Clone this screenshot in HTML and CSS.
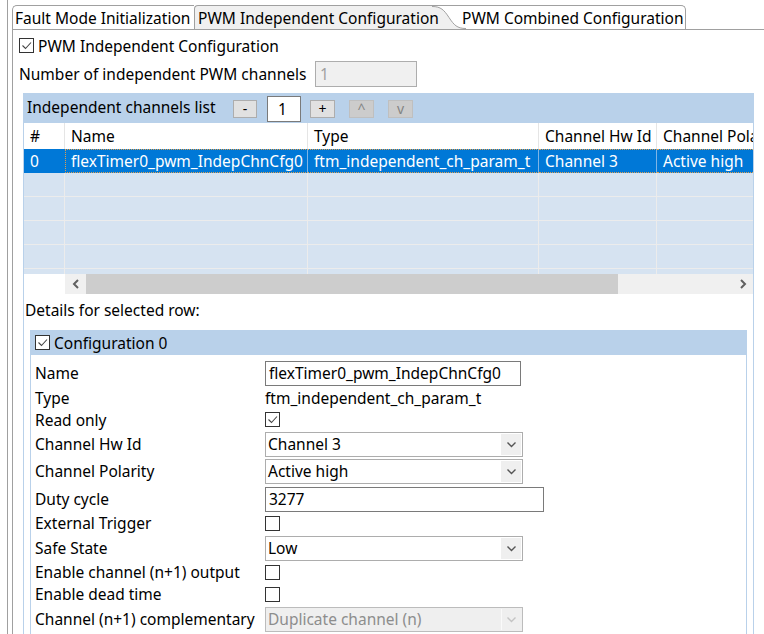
FILE: index.html
```html
<!DOCTYPE html>
<html>
<head>
<meta charset="utf-8">
<link rel="stylesheet" href="styles.css">
</head>
<body>
<div class="window">
  <div class="tabs">
    <div class="tab tab-first">Fault Mode Initialization</div>
    <div class="tab tab-sel">PWM Independent Configuration</div>
    <div class="tab tab-last">
      <svg class="slope" width="34" height="23" viewBox="0 0 34 23"><path d="M0 0 C9 0 12 4 17 11.5 C22 19 25 22.5 34 22.5 L34 23 L0 23 Z" fill="#f0f0f0"/><path d="M0 0.5 C9 0.5 12 4 17 11.5 C22 19 25 22.5 34 22.5" fill="none" stroke="#a0a0a0"/></svg>
      <span class="tab-text">PWM Combined Configuration</span>
    </div>
    <div class="tab-fill"></div>
  </div>
  <div class="page">
    <div class="check-row">
      <span class="cb"><svg width="13" height="13" viewBox="0 0 13 13"><polyline points="2.5,6.5 5.5,9.5 11,3.5" fill="none" stroke="#444" stroke-width="1.1"/></svg></span>
      <span>PWM Independent Configuration</span>
    </div>
    <div class="num-row">
      <span class="num-label">Number of independent PWM channels</span>
      <div class="field disabled">1</div>
    </div>
    <div class="group">
      <div class="group-head">
        <span class="group-title">Independent channels list</span>
        <span class="btn w24">-</span>
        <span class="spin">1</span>
        <span class="btn plus">+</span>
        <span class="btn dis up">^</span>
        <span class="btn dis down">v</span>
      </div>
      <div class="table">
        <div class="trow thead">
          <div class="c">#</div><div class="c">Name</div><div class="c">Type</div><div class="c">Channel Hw Id</div><div class="c">Channel Polarity</div>
        </div>
        <div class="tbody">
          <div class="trow sel">
            <div class="c">0</div><div class="c f first">flexTimer0_pwm_IndepChnCfg0</div><div class="c f">ftm_independent_ch_param_t</div><div class="c f">Channel 3</div><div class="c f">Active high</div>
          </div>
          <div class="trow empty"><div class="c"></div><div class="c"></div><div class="c"></div><div class="c"></div><div class="c"></div></div>
          <div class="trow empty"><div class="c"></div><div class="c"></div><div class="c"></div><div class="c"></div><div class="c"></div></div>
          <div class="trow empty"><div class="c"></div><div class="c"></div><div class="c"></div><div class="c"></div><div class="c"></div></div>
          <div class="trow empty"><div class="c"></div><div class="c"></div><div class="c"></div><div class="c"></div><div class="c"></div></div>
          <div class="trow empty"><div class="c"></div><div class="c"></div><div class="c"></div><div class="c"></div><div class="c"></div></div>
        </div>
      </div>
      <div class="hscroll">
        <span class="arr"><svg width="8" height="10" viewBox="0 0 8 10"><polyline points="6,1 2,5 6,9" fill="none" stroke="#606060" stroke-width="2"/></svg></span>
        <span class="thumb"></span>
        <span class="track"></span>
        <span class="arr"><svg width="8" height="10" viewBox="0 0 8 10"><polyline points="2,1 6,5 2,9" fill="none" stroke="#606060" stroke-width="2"/></svg></span>
      </div>
      <div class="details">Details for selected row:</div>
      <div class="config">
        <div class="config-head">
          <span class="cb"><svg width="13" height="13" viewBox="0 0 13 13"><polyline points="2.5,6.5 5.5,9.5 11,3.5" fill="none" stroke="#444" stroke-width="1.1"/></svg></span>
          <span>Configuration 0</span>
        </div>
        <div class="form">
          <div class="frow h27 in"><span class="lbl">Name</span><div class="input w256">flexTimer0_pwm_IndepChnCfg0</div></div>
          <div class="frow h22 tx"><span class="lbl">Type</span><span class="val">ftm_independent_ch_param_t</span></div>
          <div class="frow h22 ck"><span class="lbl">Read only</span><span class="cb ro"><svg width="13" height="13" viewBox="0 0 13 13"><polyline points="2.5,6.5 5.5,9.5 11,3.5" fill="none" stroke="#444" stroke-width="1.1"/></svg></span></div>
          <div class="frow h27 in"><span class="lbl">Channel Hw Id</span><div class="select"><span class="sv">Channel 3</span><span class="dd"><svg width="9" height="6" viewBox="0 0 9 6"><polyline points="0.5,0.5 4.5,4.5 8.5,0.5" fill="none" stroke="#555" stroke-width="1.4"/></svg></span></div></div>
          <div class="frow h28 in"><span class="lbl">Channel Polarity</span><div class="select"><span class="sv">Active high</span><span class="dd"><svg width="9" height="6" viewBox="0 0 9 6"><polyline points="0.5,0.5 4.5,4.5 8.5,0.5" fill="none" stroke="#555" stroke-width="1.4"/></svg></span></div></div>
          <div class="frow h26 in"><span class="lbl">Duty cycle</span><div class="input w279">3277</div></div>
          <div class="frow h23 ck"><span class="lbl">External Trigger</span><span class="cb"></span></div>
          <div class="frow h26 in"><span class="lbl">Safe State</span><div class="select"><span class="sv">Low</span><span class="dd"><svg width="9" height="6" viewBox="0 0 9 6"><polyline points="0.5,0.5 4.5,4.5 8.5,0.5" fill="none" stroke="#555" stroke-width="1.4"/></svg></span></div></div>
          <div class="frow h22 ck"><span class="lbl">Enable channel (n+1) output</span><span class="cb"></span></div>
          <div class="frow h23 ck"><span class="lbl">Enable dead time</span><span class="cb"></span></div>
          <div class="frow h27 in"><span class="lbl">Channel (n+1) complementary</span><div class="select off"><span class="sv">Duplicate channel (n)</span><span class="dd"><svg width="9" height="6" viewBox="0 0 9 6"><polyline points="0.5,0.5 4.5,4.5 8.5,0.5" fill="none" stroke="#c4c4c4" stroke-width="1.4"/></svg></span></div></div>
        </div>
      </div>
    </div>
  </div>
</div>
</body>
</html>
```

FILE: styles.css
```css
* { box-sizing: border-box; }
html, body { margin: 0; padding: 0; }
body {
  width: 764px;
  height: 634px;
  overflow: hidden;
  background: #fff;
  font-family: "Noto Sans", "Open Sans", sans-serif;
  font-size: 15.5px;
  color: #000;
}
.window {
  margin-left: 7px;
  height: 634px;
  border-left: 1px solid #a0a0a0;
  padding-left: 4px;
  padding-top: 5px;
}

/* tabs */
.tabs {
  display: flex;
  height: 25px;
  border-bottom: 1px solid #a0a0a0;
}
.tab {
  height: 24px;
  line-height: 24px;
  border-top: 1px solid #a0a0a0;
  white-space: nowrap;
  flex: none;
}
.tab-first {
  width: 182px;
  border-left: 1px solid #a0a0a0;
  border-top-left-radius: 5px;
  padding-left: 2px;
}
.tab-sel {
  width: 238px;
  background: #f0f0f0;
  border-left: 1px solid #a0a0a0;
  border-top-left-radius: 4px;
  padding-left: 3px;
  position: relative;
  z-index: 1;
}
.tab-last {
  width: 254px;
  display: flex;
  align-items: flex-start;
  border-right: 1px solid #a0a0a0;
  border-top-right-radius: 5px;
  overflow: hidden;
}
.slope { flex: none; display: block; margin-right: -4px; }
.tab-fill { flex: 1; }

/* page */
.page {
  border-left: 1px solid #a0a0a0;
  height: 604px;
  padding-left: 6px;
  padding-top: 6px;
}
.check-row {
  display: flex;
  align-items: center;
  height: 19px;
}
.check-row .cb { margin-right: 4px; }
.cb {
  width: 15px;
  height: 15px;
  border: 1px solid #333;
  background: #fff;
  flex: none;
  display: flex;
  align-items: center;
  justify-content: center;
}
.cb svg { display: block; }
.num-row {
  display: flex;
  align-items: center;
  height: 26px;
  margin-top: 6px;
}
.num-label { width: 296px; flex: none; }
.field {
  width: 102px;
  height: 26px;
  border: 1px solid #adadad;
  padding-left: 4px;
  line-height: 24px;
}
.field.disabled { background: #f0f0f0; color: #a0a0a0; }

/* group */
.group {
  margin-top: 6px;
  margin-left: 4px;
  width: 731px;
  height: 560px;
  border: 1px solid #b9d1ea;
  border-bottom: none;
}
.group-head {
  display: flex;
  align-items: center;
  height: 29px;
  background: #b9d1ea;
  padding-left: 3px;
}
.group-title { width: 206px; flex: none; margin-bottom: 4px; }
.btn {
  width: 25px;
  height: 18px;
  border: 1px solid #adadad;
  background: #e1e1e1;
  text-align: center;
  line-height: 15px;
  font-size: 14px;
  flex: none;
}
.btn.w24 { width: 24px; }
.btn.plus { margin-left: 9px; }
.btn.up, .btn.down { margin-left: 14px; }
.btn.dis { background: #cccccc; border-color: #bfbfbf; color: #838383; }
.spin {
  width: 34px;
  height: 26px;
  margin-left: 10px;
  border: 1px solid #7a7a7a;
  background: #fff;
  text-align: center;
  line-height: 24px;
  padding-right: 3px;
  flex: none;
}

/* table */
.trow {
  display: grid;
  grid-template-columns: 41px 243px 231px 118px 96px;
}
.c {
  padding-left: 6px;
  white-space: nowrap;
  overflow: hidden;
  border-right: 1px solid #e5e5e5;
}
.c:last-child { border-right: none; }
.thead { height: 26px; line-height: 26px; background: #fff; }
.tbody { height: 125px; overflow: hidden; }
.sel { height: 24px; background: #0078d7; color: #fff; }
.sel .c { line-height: 22px; border-right-color: #7fb5e6; }
.sel .c:first-child { border-right: none; line-height: 24px; }
.sel .c.f {
  border-top: 1px dotted #e0a050;
  border-bottom: 1px dotted #e0a050;
}
.sel .c.first { border-left: 1px dotted #e0a050; padding-left: 5px; }
.empty { height: 24px; background: #d6e3f1; }
.empty .c { border-bottom: 1px solid #ececec; border-right-color: #ececec; }

.hscroll {
  display: flex;
  margin-left: 41px;
  width: 688px;
  height: 20px;
  background: #f0f0f0;
}
.arr {
  width: 21px;
  flex: none;
  display: flex;
  align-items: center;
  justify-content: center;
}
.thumb { width: 532px; flex: none; background: #cdcdcd; }
.track { flex: 1; }

.details {
  padding-left: 1px;
  padding-top: 6px;
  line-height: 20px;
  height: 36px;
}

/* config */
.config {
  margin: 0 6px;
  border-left: 1px solid #b9d1ea;
  border-right: 1px solid #b9d1ea;
  height: 320px;
}
.config-head {
  display: flex;
  align-items: center;
  height: 25px;
  background: #b9d1ea;
  padding-left: 4px;
}
.config-head .cb { margin-right: 4px; }
.form { padding-top: 6px; padding-left: 4px; }
.frow { display: flex; align-items: flex-start; }
.h22 { height: 22px; }
.h23 { height: 23px; }
.h26 { height: 26px; }
.h27 { height: 27px; }
.h28 { height: 28px; }
.lbl { width: 230px; flex: none; white-space: nowrap; }
.in .lbl { line-height: 25px; }
.tx .lbl, .tx .val { line-height: 20px; }
.ck .lbl { line-height: 21px; }
.ck .cb { margin-top: 3px; }
.ck .cb.ro { margin-top: 2px; }
.input {
  height: 25px;
  border: 1px solid #7a7a7a;
  padding-left: 3px;
  line-height: 23px;
  white-space: nowrap;
  overflow: hidden;
}
.w256 { width: 256px; }
.w279 { width: 279px; }
.select {
  width: 258px;
  height: 25px;
  border: 1px solid #adadad;
  display: flex;
  align-items: stretch;
}
.sv { flex: 1; padding-left: 2px; line-height: 23px; white-space: nowrap; }
.dd {
  width: 20px;
  margin: 1px 1px 1px 0;
  background: #efefef;
  display: flex;
  align-items: center;
  justify-content: center;
}
.select.off { background: #efefef; border-color: #bcbcbc; color: #8d8d8d; }
.select.off .dd { border-left: 1px solid #fafafa; }
```
